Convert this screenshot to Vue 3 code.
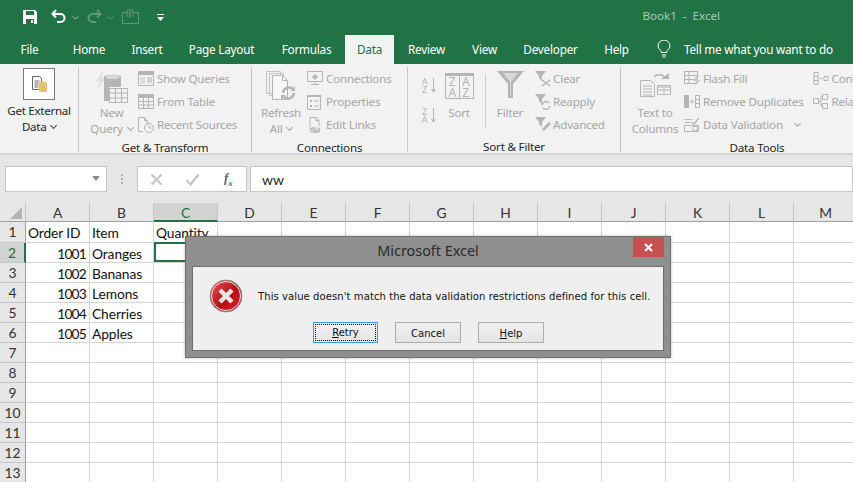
<template>
  <div class="excel">
    <div class="titlebar">
      <div class="qat">
        <svg class="q-save" width="16" height="16" viewBox="0 0 16 16"><path d="M1 1h12l2 2v12H1z" fill="#fff"/><path d="M4 2h8v4H4zM4 10h8v5H4z" fill="#217346"/><path d="M9 11h2v3H9z" fill="#fff"/></svg>
        <svg class="q-undo" width="15" height="14" viewBox="0 0 15 14"><path d="M5 1 1.500 5 5 8.500M2 5h7.500a4 4 0 0 1 0 8H6" fill="none" stroke="#fff" stroke-width="2"/></svg>
        <svg class="q-caret" width="7" height="4" viewBox="0 0 7 4"><path d="M.5.500 3.500 3l3-2.500" fill="none" stroke="#9fc2ae"/></svg>
        <svg class="q-redo" width="15" height="14" viewBox="0 0 15 14"><path d="M10 1l3.500 4L10 8.500M13 5H5.500a4 4 0 0 0 0 8H9" fill="none" stroke="#5f9a7c" stroke-width="2"/></svg>
        <svg class="q-caret2" width="7" height="4" viewBox="0 0 7 4"><path d="M.5.500 3.500 3l3-2.500" fill="none" stroke="#5f9a7c"/></svg>
        <svg class="q-touch" width="17" height="16" viewBox="0 0 17 16"><path d="M1 4.500h3M11 4.500h5.500v11H.5v-11M5 9V3a1.500 1.500 0 0 1 3 0v7M8 9V3a1.500 1.500 0 0 1 3 0v6" fill="none" stroke="#5f9a7c"/></svg>
        <svg class="q-more" width="7" height="7" viewBox="0 0 7 7"><path d="M0 0h7v1H0z" fill="#fff"/><path d="M0 3h7L3.500 7z" fill="#fff"/></svg>
      </div>
      <span class="doc-title">Book1&nbsp; -&nbsp; Excel</span>
    </div>

    <div class="tabs">
      <span
        v-for="t in tabs"
        :key="t.name"
        class="tab"
        :class="{ active: t.name === 'Data' }"
        :style="{ width: t.width + 'px' }"
      >{{ t.name }}</span>
      <svg class="bulb" width="14" height="18" viewBox="0 0 14 18"><path d="M4.500 12.500C4 9.500 1 9 1 6a6 6 0 0 1 12 0c0 3-3 3.500-3.500 6.500zM5 15h4M5.500 17h3" fill="none" stroke="#fff"/></svg>
      <span class="tell">Tell me what you want to do</span>
    </div>

    <div class="ribbon">
      <section class="group g1">
        <div class="body">
          <div class="big ext">
            <div class="ext-box">
              <svg width="15" height="17" viewBox="0 0 15 17"><path d="M.5.500h7l2 2v11H.5z" fill="#fff" stroke="#666"/><path d="M2.500 5h5M2.500 7h4M2.500 9h4M2.500 11h4" stroke="#666"/><path d="M7 6.500c0-1.500 8-1.500 8 0V15c0 1.500-8 1.500-8 0z" fill="#e8bd74"/></svg>
            </div>
            <span>Get External</span>
            <span>Data <i class="chev dark"></i></span>
          </div>
        </div>
        <div class="label">&nbsp;</div>
      </section>

      <section class="group g2">
        <div class="body">
          <div class="big off query">
            <div class="icon">
              <svg width="33" height="32" viewBox="0 0 33 32"><path d="M8 0 1 10h4L2 18l9-11H7z" fill="#e0e0e0"/><path d="M9 6c0-3 17-3 17 0v10H14v14H9z" fill="#b5b5b5"/><ellipse cx="17.500" cy="6" rx="7" ry="2" fill="#d9d9d9"/><path d="M14.500 17.500h18v14h-18zM14.500 22h18M14.500 27h18M20.500 17.500v14M26.500 17.500v14" fill="#f2f2f2" stroke="#b5b5b5"/></svg>
            </div>
            <span>New</span>
            <span>Query <i class="chev"></i></span>
          </div>
          <div class="list">
            <div class="item">
              <svg width="16" height="15" viewBox="0 0 16 15"><path d="M.5.500h15v14H.5z" fill="none" stroke="#b5b5b5"/><path d="M1 1h14v3H1z" fill="#b5b5b5"/><path d="M2 6h5v7H2z" fill="#ddd"/><path d="M9 7h5M9 9h5M9 11h5" stroke="#b5b5b5"/></svg>
              <span>Show Queries</span>
            </div>
            <div class="item">
              <svg width="16" height="15" viewBox="0 0 16 15"><path d="M.5.500h15v14H.5z" fill="none" stroke="#b5b5b5"/><path d="M1 1h14v3H1z" fill="#b5b5b5"/><path d="M1 7.500h14M1 11h14M5.500 4v10M10.500 4v10" stroke="#b5b5b5"/></svg>
              <span>From Table</span>
            </div>
            <div class="item">
              <svg width="16" height="16" viewBox="0 0 16 16"><path d="M5 14.500H.5V.500h6l3 3V7M6.500.500v3h3" fill="none" stroke="#b5b5b5"/><circle cx="11" cy="11" r="4.500" fill="#f2f2f2" stroke="#b5b5b5"/><path d="M11 8.500V11h2.500" fill="none" stroke="#b5b5b5"/></svg>
              <span>Recent Sources</span>
            </div>
          </div>
        </div>
        <div class="label">Get &amp; Transform</div>
      </section>

      <section class="group g3">
        <div class="body">
          <div class="big off refresh">
            <div class="icon">
              <svg width="30" height="32" viewBox="0 0 30 32"><path d="M.5.500h14v22H.5zM3.500 2.500h14v22h-14z" fill="#f2f2f2" stroke="#c4c4c4"/><path d="M6.500 4.500h10l5 5v19h-15z" fill="#f7f7f7" stroke="#b5b5b5"/><path d="M16.500 4.500v5h5" fill="none" stroke="#b5b5b5"/><path d="M17 22a6 6 0 0 1 10-4M28 22a6 6 0 0 1-10 4" fill="none" stroke="#b5b5b5" stroke-width="2.500"/><path d="M25 20h4v-5zM20 24h-5v5z" fill="#b5b5b5"/></svg>
            </div>
            <span>Refresh</span>
            <span>All <i class="chev"></i></span>
          </div>
          <div class="list">
            <div class="item">
              <svg width="16" height="15" viewBox="0 0 16 15"><path d="M.5.500h15v10H.5zM4 13.500h8M8 11v2" fill="none" stroke="#b5b5b5"/><path d="M8 3l3 3-3 3-3-3z" fill="#b5b5b5"/></svg>
              <span>Connections</span>
            </div>
            <div class="item">
              <svg width="16" height="16" viewBox="0 0 16 16"><path d="M.5 1.500h13v14H.5z" fill="none" stroke="#b5b5b5"/><path d="M1 1h13v2H1z" fill="#b5b5b5"/><path d="M3 6h2v2H3zM3 11h2v2H3z" fill="#b5b5b5"/><path d="M7 7h5M7 12h5" stroke="#b5b5b5"/></svg>
              <span>Properties</span>
            </div>
            <div class="item">
              <svg width="15" height="16" viewBox="0 0 15 16"><path d="M2.500 10V.500h6l3 3V9M8.500.500v3h3" fill="none" stroke="#b5b5b5"/><path d="M5 11a2 2 0 0 0 0 4h4M10 11a2 2 0 0 1 0 4H6M5 13h5M5 11h3" fill="none" stroke="#b5b5b5" stroke-width="1.300"/></svg>
              <span>Edit Links</span>
            </div>
          </div>
        </div>
        <div class="label">Connections</div>
      </section>

      <section class="group g4">
        <div class="body">
          <div class="sort-col">
            <div class="az"><span class="az-text">A<br>Z</span><svg width="5" height="15" viewBox="0 0 5 15"><path d="M2.500 0v14M.5 11l2 3 2-3" fill="none" stroke="#b5b5b5"/></svg></div>
            <div class="az"><span class="az-text">Z<br>A</span><svg width="5" height="15" viewBox="0 0 5 15"><path d="M2.500 0v14M.5 11l2 3 2-3" fill="none" stroke="#b5b5b5"/></svg></div>
          </div>
          <div class="big off sort">
            <div class="sort-icon">
              <span>Z<br>A</span>
              <span>A<br>Z</span>
            </div>
            <span>Sort</span>
          </div>
          <div class="divider"></div>
          <div class="big off filter">
            <div class="icon">
              <svg width="27" height="27" viewBox="0 0 27 27"><path d="M0 0h27L16 13v14h-5V13z" fill="#b5b5b5"/><path d="M6 2h15l-7 9v14h-1V11z" fill="#d8d8d8"/></svg>
            </div>
            <span>Filter</span>
          </div>
          <div class="list">
            <div class="item wide">
              <svg width="17" height="16" viewBox="0 0 17 16"><path d="M0 0h11L7 5v5L4 7V5z" fill="#b5b5b5"/><path d="M7 9l8 6M15 9l-8 6" stroke="#b5b5b5" stroke-width="1.500"/></svg>
              <span>Clear</span>
            </div>
            <div class="item wide">
              <svg width="17" height="16" viewBox="0 0 17 16"><path d="M0 0h11L7 5v5L4 7V5z" fill="#b5b5b5"/><path d="M7 11a4 4 0 0 1 7-2M15 12a4 4 0 0 1-7 2" fill="none" stroke="#b5b5b5" stroke-width="1.500"/></svg>
              <span>Reapply</span>
            </div>
            <div class="item wide">
              <svg width="17" height="16" viewBox="0 0 17 16"><path d="M0 0h11L7 5v5L4 7V5z" fill="#b5b5b5"/><path d="M7 14l1-3 6-6 2 2-6 6z" fill="#b5b5b5"/></svg>
              <span>Advanced</span>
            </div>
          </div>
        </div>
        <div class="label">Sort &amp; Filter</div>
      </section>

      <section class="group g5">
        <div class="body">
          <div class="big off text-cols">
            <div class="icon">
              <svg width="31" height="26" viewBox="0 0 31 26"><path d="M.5 9.500h10l4 4v12H.5zM3 15h9M3 18h9M3 21h9M3 24h9" fill="#f2f2f2" stroke="#b5b5b5"/><path d="M17.500 14.500h13v9h-13zM17.500 19h13M24 14.500v9M17.500 16h13" fill="#f2f2f2" stroke="#b5b5b5"/><path d="M14 6a8 8 0 0 1 11 0" fill="none" stroke="#b5b5b5" stroke-width="1.500"/><path d="M21 8h8V2z" fill="#b5b5b5"/></svg>
            </div>
            <span>Text to</span>
            <span>Columns</span>
          </div>
          <div class="list tools">
            <div class="item">
              <svg width="16" height="15" viewBox="0 0 16 15"><path d="M.5.500h13v12H.5zM.5 4.500h13M.5 8.500h13M5 .500v12" fill="none" stroke="#b5b5b5"/><path d="M12 5l-3 5h3l-1 5 5-6h-3l2-4z" fill="#c9c9c9"/></svg>
              <span>Flash Fill</span>
            </div>
            <div class="item">
              <svg width="16" height="13" viewBox="0 0 16 13"><path d="M0 0h5v13H0z" fill="#b5b5b5"/><path d="M11.500.500h4v12h-4zM11.500 4.500h4M11.500 8.500h4" fill="none" stroke="#b5b5b5"/><path d="M6 6.500h4M8 4.500v4" stroke="#b5b5b5"/></svg>
              <span>Remove Duplicates</span>
            </div>
            <div class="item">
              <svg width="16" height="15" viewBox="0 0 16 15"><path d="M.5 2.500h8M.5 5.500h6M.5 8.500h14v6H.5z" fill="none" stroke="#b5b5b5"/><path d="M8 5l2 2 5-6" fill="none" stroke="#b5b5b5" stroke-width="1.300"/><circle cx="11" cy="11.500" r="2.500" fill="#f2f2f2" stroke="#b5b5b5"/></svg>
              <span>Data Validation</span>
              <i class="chev dv"></i>
            </div>
          </div>
          <div class="list extra">
            <div class="item">
              <svg width="15" height="13" viewBox="0 0 15 13"><path d="M.5.500h4v12h-4zM.5 4.500h4M.5 8.500h4M10.500 4.500h4v4h-4z" fill="none" stroke="#b5b5b5"/><path d="M6 6.500h3" stroke="#b5b5b5"/></svg>
              <span>Consolidate</span>
            </div>
            <div class="item">
              <svg width="16" height="15" viewBox="0 0 16 15"><path d="M.5 4.500h5v5h-5zM9.500.500h5v5h-5zM9.500 9.500h5v5h-5zM5 7h3V3h2M8 7v5h2" fill="none" stroke="#b5b5b5"/></svg>
              <span>Relationships</span>
            </div>
          </div>
        </div>
        <div class="label tools-label">Data Tools</div>
      </section>
    </div>

    <div class="formula-bar">
      <div class="name-box"><span class="drop"></span></div>
      <div class="grip"></div>
      <div class="fx-box">
        <svg width="13" height="13" viewBox="0 0 13 13"><path d="M1.500 1.500l10 10M11.500 1.500l-10 10" stroke="#c4c4c4" stroke-width="2"/></svg>
        <svg width="15" height="13" viewBox="0 0 15 13"><path d="M1.500 7l4 4.500 8-10" fill="none" stroke="#c4c4c4" stroke-width="2.200"/></svg>
        <span class="fx">f<sub>x</sub></span>
      </div>
      <div class="input-box">ww</div>
    </div>

    <div class="sheet">
      <div class="corner"><span class="tri"></span></div>
      <div v-for="c in columns" :key="c" class="col-head" :class="{ sel: c === 'C' }">{{ c }}</div>
      <template v-for="n in 13" :key="n">
        <div class="row-head" :class="{ sel: n === 2 }">{{ n }}</div>
        <div
          v-for="(c, i) in columns"
          :key="c"
          class="cell"
          :class="{ num: i === 0 && n > 1, current: c === 'C' && n === 2 }"
        >{{ cellText(n, i) }}</div>
      </template>
    </div>

    <div class="dialog">
      <div class="dlg-title">
        <span>Microsoft Excel</span>
        <div class="close">
          <svg width="9" height="9" viewBox="0 0 9 9"><path d="M1 1l7 7M8 1 1 8" stroke="#fff" stroke-width="2"/></svg>
        </div>
      </div>
      <div class="dlg-body">
        <div class="dlg-msg">
          <svg width="34" height="34" viewBox="0 0 34 34">
            <defs>
              <linearGradient id="errRed" x1="0" y1="0" x2="1" y2="1">
                <stop offset="0" stop-color="#e25a5a"/>
                <stop offset="0.55" stop-color="#b80f14"/>
                <stop offset="1" stop-color="#d8282c"/>
              </linearGradient>
            </defs>
            <circle cx="17" cy="17" r="16" fill="url(#errRed)" stroke="#8d8d8d"/>
            <circle cx="17" cy="17" r="14.500" fill="none" stroke="#f1e4e4"/>
            <path d="M11 11l12 12M23 11 11 23" stroke="#e6e6e6" stroke-width="4.500"/>
          </svg>
          <p>This value doesn't match the data validation restrictions defined for this cell.</p>
        </div>
        <div class="dlg-buttons">
          <button class="focus"><span><u>R</u>etry</span></button>
          <button>Cancel</button>
          <button><u>H</u>elp</button>
        </div>
      </div>
    </div>
  </div>
</template>

<script setup>
// widths follow the ribbon's own tab spacing, text is centred in each
const tabs = [
  { name: 'File', width: 59 },
  { name: 'Home', width: 60 },
  { name: 'Insert', width: 56 },
  { name: 'Page Layout', width: 93 },
  { name: 'Formulas', width: 77 },
  { name: 'Data', width: 49 },
  { name: 'Review', width: 65 },
  { name: 'View', width: 51 },
  { name: 'Developer', width: 81 },
  { name: 'Help', width: 51 },
]
const columns = ['A', 'B', 'C', 'D', 'E', 'F', 'G', 'H', 'I', 'J', 'K', 'L', 'M']

const rows = [
  ['Order ID', 'Item', 'Quantity'],
  [1001, 'Oranges'],
  [1002, 'Bananas'],
  [1003, 'Lemons'],
  [1004, 'Cherries'],
  [1005, 'Apples'],
]

function cellText(n, i) {
  const row = rows[n - 1]
  return row ? row[i] : ''
}
</script>

<style>
html,
body {
  margin: 0;
  overflow: hidden;
}
</style>

<style scoped>
.excel {
  position: relative;
  width: 853px;
  height: 482px;
  overflow: hidden;
  background: #fff;
  font-family: "Noto Sans", sans-serif;
  font-size: 12px;
  color: #262626;
}

.titlebar {
  height: 35px;
  background: #217346;
  display: flex;
  align-items: flex-start;
}

.qat {
  display: flex;
  align-items: flex-start;
  padding: 9px 0 0 22px;
}

.q-undo { margin-left: 13px; }
.q-caret { margin: 7px 0 0 6px; }
.q-redo { margin-left: 8px; }
.q-caret2 { margin: 7px 0 0 5px; }
.q-touch { margin: -1px 0 0 8px; }
.q-more { margin: 5px 0 0 18px; }

.doc-title {
  margin: 7px 133px 0 auto;
  color: #a9c9b6;
  font-size: 11.600px;
  line-height: 18px;
}

.tabs {
  height: 29px;
  background: #217346;
  display: flex;
  align-items: stretch;
  color: #fff;
  white-space: nowrap;
  font-size: 11.700px;
  letter-spacing: -0.2px;
}

.tab {
  flex: none;
  padding-top: 5px;
  line-height: 18px;
  text-align: center;
}

.tab.active {
  background: #f2f2f2;
  color: #217346;
}

.bulb {
  margin: 5px 0 0 15px;
}

.tell {
  margin-left: 13px;
  padding-top: 5px;
  line-height: 18px;
}

.ribbon {
  height: 91px;
  box-sizing: border-box;
  background: #f2f2f2;
  border-bottom: 2px solid #d4d4d4;
  display: flex;
  align-items: flex-start;
  white-space: nowrap;
  overflow: hidden;
  font-size: 11.600px;
  letter-spacing: -0.2px;
}

.group {
  flex: none;
  box-sizing: border-box;
  height: 85px;
  margin-top: 3px;
  border-right: 1px solid #c6c6c6;
  display: flex;
  flex-direction: column;
}

.g1 { width: 79px; }
.g2 { width: 173px; }
.g3 { width: 156px; }
.g4 { width: 213px; }
.g5 { width: 240px; border-right: 0; }

.body {
  flex: 1;
  display: flex;
  align-items: flex-start;
}

.label {
  height: 18px;
  line-height: 21px;
  text-align: center;
  color: #262626;
}

.tools-label {
  width: 120px;
  margin-left: 76px;
}

.big {
  display: flex;
  flex-direction: column;
  align-items: center;
  line-height: 16px;
  flex: none;
}

.big.off { color: #a6a6a6; }

.icon {
  height: 38px;
  display: flex;
  align-items: flex-start;
  padding-top: 4px;
  box-sizing: border-box;
}

.ext {
  width: 78px;
  color: #262626;
  letter-spacing: -0.3px;
}

.ext-box {
  width: 30px;
  height: 30px;
  margin: 1px 0 3px;
  background: #fff;
  border: 1px solid #7a7a7a;
  display: flex;
  align-items: center;
  justify-content: center;
}

.query { width: 47px; margin-left: 9px; }
.refresh { width: 46px; margin-left: 6px; }
.sort { width: 30px; margin-left: 8px; }
.filter { width: 30px; margin-left: 9px; }
.text-cols { width: 52px; margin-left: 8px; }

.chev {
  display: inline-block;
  width: 4px;
  height: 4px;
  margin: 0 0 3px 2px;
  border-right: 1px solid #a6a6a6;
  border-bottom: 1px solid #a6a6a6;
  transform: rotate(45deg);
}

.chev.dark {
  border-color: #444;
}

.chev.dv {
  margin: 0 0 3px 9px;
}

.list {
  display: flex;
  flex-direction: column;
  margin-left: 3px;
  color: #a6a6a6;
}

.g4 .list { margin-left: 10px; }
.g5 .list { margin-left: 3px; }
.g5 .extra { margin-left: 9px; }
.tools { width: 121px; }

.item {
  height: 23px;
  display: flex;
  align-items: center;
  gap: 3px;
}

.item svg {
  flex: none;
  width: 16px;
}

.item.wide {
  gap: 1px;
}

.item.wide svg {
  width: 17px;
}

.sort-col {
  margin: 11px 0 0 12px;
  display: flex;
  flex-direction: column;
  gap: 14px;
}

.az {
  width: 16px;
  height: 16px;
  display: flex;
  gap: 2px;
}

.az-text {
  width: 9px;
  text-align: center;
  font-size: 9px;
  line-height: 8px;
  color: #b5b5b5;
}

.sort-icon {
  width: 29px;
  height: 26px;
  margin: 6px 0 6px;
  box-sizing: border-box;
  border: 1px solid #b5b5b5;
  border-top-width: 3px;
  display: grid;
  grid-template-columns: 1fr 1fr;
  text-align: center;
  font-size: 12px;
  line-height: 11px;
  letter-spacing: 0;
  color: #b5b5b5;
  background: linear-gradient(#b5b5b5, #b5b5b5) center / 1px 100% no-repeat;
}

.divider {
  width: 1px;
  height: 55px;
  margin: 7px 0 0 11px;
  background: #d0d0d0;
}

.formula-bar {
  height: 48px;
  box-sizing: border-box;
  background: #e6e6e6;
  padding-top: 11px;
  display: flex;
  align-items: flex-start;
}

.name-box,
.fx-box,
.input-box {
  height: 26px;
  box-sizing: border-box;
  background: #fff;
  border: 1px solid #c6c6c6;
}

.name-box {
  width: 102px;
  margin-left: 5px;
  position: relative;
}

.drop {
  position: absolute;
  right: 6px;
  top: 9px;
  border: 4px solid transparent;
  border-top: 5px solid #888;
}

.grip {
  width: 2px;
  height: 10px;
  margin: 8px 14px 0 14px;
  background: repeating-linear-gradient(#b0b0b0 0 2px, transparent 2px 4px);
}

.fx-box {
  width: 110px;
  display: flex;
  align-items: center;
  padding-left: 12px;
  gap: 22px;
}

.fx {
  margin-left: 2px;
  font-family: "Liberation Serif", serif;
  font-style: italic;
  font-weight: 700;
  font-size: 13px;
  color: #666;
}

.fx sub {
  font-size: 9px;
}

.input-box {
  flex: 1;
  margin-left: 3px;
  padding-left: 11px;
  line-height: 25px;
  font-family: Lato, sans-serif;
  font-size: 14px;
}

.sheet {
  display: grid;
  grid-template-columns: 26px repeat(13, 64px);
  grid-template-rows: 19px 21px repeat(12, 20px);
  font-family: Lato, sans-serif;
  font-size: 13.800px;
  letter-spacing: -0.1px;
  color: #111;
}

.corner,
.col-head,
.row-head {
  background: #e6e6e6;
  box-sizing: border-box;
  text-align: center;
  color: #333;
}

.corner {
  position: relative;
  border-right: 1px solid #c6c6c6;
  border-bottom: 1px solid #a0a0a0;
}

.tri {
  position: absolute;
  right: 3px;
  bottom: 2px;
  border-left: 12px solid transparent;
  border-bottom: 12px solid #b5b5b5;
}

.col-head {
  border-right: 1px solid #c6c6c6;
  border-bottom: 1px solid #a0a0a0;
  line-height: 20px;
}

.col-head.sel {
  background: #d2d2d2;
  color: #217346;
  border-bottom: 2px solid #217346;
}

.row-head {
  border-right: 1px solid #a0a0a0;
  border-bottom: 1px solid #c6c6c6;
  line-height: 20px;
}

.row-head.sel {
  background: #d2d2d2;
  color: #217346;
  border-right: 2px solid #217346;
}

.cell {
  box-sizing: border-box;
  border-right: 1px solid #d4d4d4;
  border-bottom: 1px solid #d4d4d4;
  padding: 0 2px;
  line-height: 21px;
  white-space: nowrap;
}

.cell.num {
  text-align: right;
  padding-right: 3px;
  letter-spacing: -0.8px;
}

.cell.current {
  margin-top: -1px;
  box-shadow: inset 0 0 0 2px #217346;
}

.dialog {
  position: absolute;
  left: 185px;
  top: 236px;
  width: 486px;
  height: 122px;
  box-sizing: border-box;
  background: #8f8f8f;
  border: 1px solid #6f6f6f;
  box-shadow: 0 0 3px rgba(0, 0, 0, 0.25);
  display: flex;
  flex-direction: column;
}

.dlg-title {
  position: relative;
  height: 29px;
  flex: none;
  text-align: center;
  font-size: 14.400px;
  line-height: 28px;
  color: #2b2b2b;
}

.close {
  position: absolute;
  top: 0;
  right: 6px;
  width: 31px;
  height: 20px;
  background: #c75050;
  display: flex;
  align-items: center;
  justify-content: center;
}

.dlg-body {
  flex: 1;
  margin: 0 6px 6px;
  background: #efefef;
  border: 1px solid #6f6f6f;
  display: flex;
  flex-direction: column;
}

.dlg-msg {
  display: flex;
  align-items: center;
  padding: 12px 0 0 16px;
}

.dlg-msg p {
  margin: 2px 0 0 15px;
  font-family: "DejaVu Sans", sans-serif;
  font-size: 10px;
  letter-spacing: 0.09px;
  line-height: 14px;
  color: #111;
  white-space: nowrap;
}

.dlg-buttons {
  display: flex;
  gap: 17px;
  margin: 9px 0 0 120px;
}

.dlg-buttons button {
  width: 66px;
  height: 21px;
  box-sizing: border-box;
  padding: 1px 0 0;
  background: linear-gradient(#f0f0f0, #e5e5e5);
  border: 1px solid #acacac;
  border-radius: 0;
  font-family: "DejaVu Sans", sans-serif;
  font-size: 10px;
  color: #111;
}

.dlg-buttons .focus {
  width: 65px;
  border: 1px solid #3399ff;
  padding: 1px;
}

.focus span {
  display: block;
  height: 100%;
  line-height: 16px;
  box-sizing: border-box;
  border: 1px dotted #111;
}
</style>
